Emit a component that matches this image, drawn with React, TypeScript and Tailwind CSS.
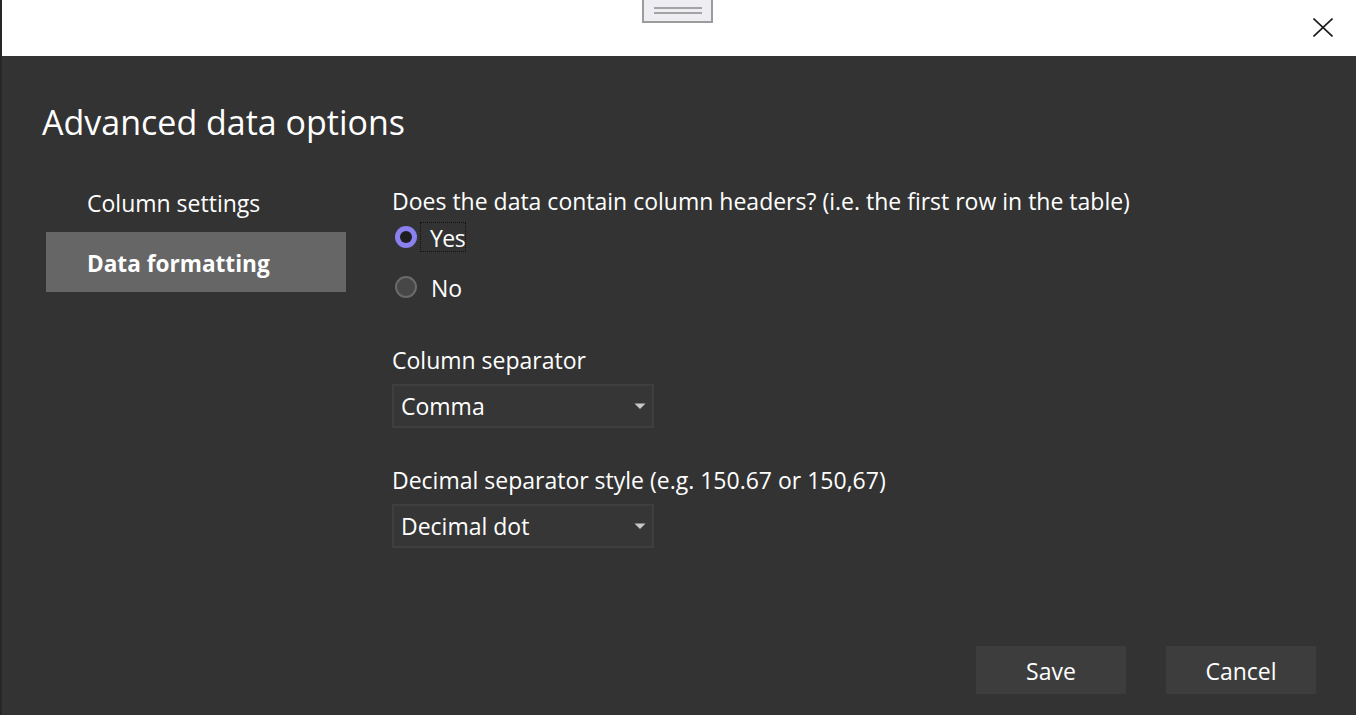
import React from "react";

const font = { fontFamily: '"Segoe UI", "Open Sans", "Noto Sans", sans-serif' };

function Dropdown({ value }: { value: string }) {
  return (
    <div className="w-[262px] h-[44px] bg-[#363636] border-2 border-[#3f3f3f] flex items-center justify-between pl-[7px] pr-[6px]">
      <span className="text-[23px] text-white leading-none pt-[1px]">{value}</span>
      <svg width="12" height="7" viewBox="0 0 12 7">
        <path d="M0.5 0.5 L11.5 0.5 L6 6 Z" fill="#c8c8c8" />
      </svg>
    </div>
  );
}

export default function App() {
  return (
    <div className="w-full h-[715px] flex overflow-hidden" style={font}>
      <div className="w-[2px] h-full bg-[#272727] shrink-0" />
      <div className="flex-1 flex flex-col min-w-0">
        <div className="h-[56px] bg-white relative shrink-0">
          <div className="absolute left-[640px] top-0 w-[71px] h-[23px] bg-[#eeeef2] border-2 border-t-0 border-[#9c9c9c] flex flex-col items-center justify-center gap-[3px] pb-[1px]">
            <div className="w-[48px] h-[2px] bg-[#a3a3a3]" />
            <div className="w-[48px] h-[2px] bg-[#a3a3a3]" />
          </div>
          <svg className="absolute left-[1311px] top-[18px]" width="20" height="19" viewBox="0 0 20 19">
            <path d="M0.5 0.5 L19.5 18.5 M19.5 0.5 L0.5 18.5" stroke="#1a1a1a" strokeWidth="1.6" />
          </svg>
        </div>
        <div className="flex-1 bg-[#333333] flex flex-col text-white">
          <div className="pl-[40px] pt-[44px] h-[116px]">
            <h1 className="text-[34px] leading-[44px] font-normal">Advanced data options</h1>
          </div>
          <div className="flex flex-1">
            <div className="ml-[44px] w-[300px] flex flex-col">
              <div className="h-[60px] flex items-center pl-[41px] pt-[3px] text-[23px]">Column settings</div>
              <div className="h-[60px] flex items-center pl-[41px] pt-[3px] text-[22.6px] font-bold bg-[#666666]">Data formatting</div>
            </div>
            <div className="ml-[46px] flex flex-col pt-[14px]">
              <div className="text-[23px] leading-[30px]">Does the data contain column headers? (i.e. the first row in the table)</div>
              <div className="flex items-center h-[36px] mt-[3px]">
                <div className="w-[22px] h-[22px] rounded-full bg-[#8b80f0] flex items-center justify-center ml-[3px]">
                  <div className="w-[12px] h-[12px] rounded-full bg-[#1e1e1e]" />
                </div>
                <div className="ml-[3px] pl-[9px] pr-[0px] h-[30px] flex items-center border border-dotted border-[#111] text-[23px] tracking-[-0.5px] pt-[2px]">Yes</div>
              </div>
              <div className="flex items-center h-[36px] mt-[14px]">
                <div className="w-[22px] h-[22px] rounded-full bg-[#474747] border-2 border-[#6a6a6a] ml-[3px]" />
                <div className="ml-[4px] px-[10px] text-[23px] pt-[2px]">No</div>
              </div>
              <div className="text-[23px] leading-[30px] mt-[40px]">Column separator</div>
              <div className="mt-[9px]"><Dropdown value="Comma" /></div>
              <div className="text-[23px] leading-[30px] mt-[37px]">Decimal separator style (e.g. 150.67 or 150,67)</div>
              <div className="mt-[9px]"><Dropdown value="Decimal dot" /></div>
            </div>
          </div>
          <div className="flex justify-end gap-[40px] pr-[40px] pb-[21px]">
            <button className="w-[150px] h-[48px] bg-[#3d3d3d] text-white text-[23px] pt-[2px]">Save</button>
            <button className="w-[150px] h-[48px] bg-[#3d3d3d] text-white text-[23px] pt-[2px]">Cancel</button>
          </div>
        </div>
      </div>
    </div>
  );
}
